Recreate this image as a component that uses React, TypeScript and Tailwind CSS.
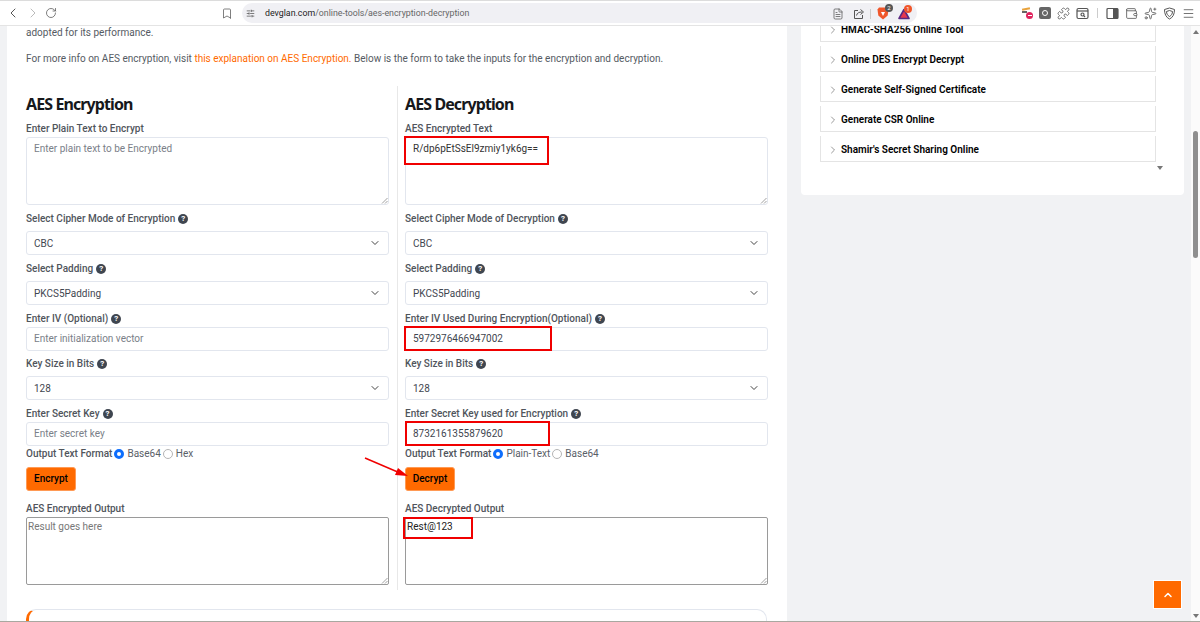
import type React from "react"
import { ChevronDown, ChevronLeft, ChevronRight, ChevronUp, RotateCw, Bookmark, SlidersHorizontal, FileText, Puzzle, Menu, Wallet, Sparkles } from "lucide-react"

const labelCls = "text-[10px] h-[14px] leading-[16px] font-medium text-[#50555c] flex items-start"
const boxCls = "h-[24px] w-full bg-white border border-[#e2e6ee] rounded-[3px] flex items-center px-[7px] text-[10px] text-[#3f4650] shrink-0"

function Help() {
  return (
    <span className="ml-[3px] mt-[3px] w-[10px] h-[10px] rounded-full bg-[#3f4650] text-white text-[8px] leading-[10px] font-bold text-center inline-block">?</span>
  )
}

function Select({ value }: { value: string }) {
  return (
    <div className={boxCls + " justify-between"}>
      <span>{value}</span>
      <ChevronDown className="w-[12px] h-[12px] text-[#444]" strokeWidth={2} />
    </div>
  )
}

function Radio({ on, text }: { on?: boolean; text: string }) {
  return (
    <span className="ml-[2px] h-[16px] flex items-center gap-[3px] font-normal text-[#5a6068]">
      {on ? (
        <span className="w-[10px] h-[10px] rounded-full border-[3px] border-[#0d6efd] bg-white" />
      ) : (
        <span className="w-[10px] h-[10px] rounded-full border border-[#b5b5b5] bg-white" />
      )}
      {text}
    </span>
  )
}

function Grip() {
  return (
    <svg className="absolute right-0 bottom-0" width="7" height="7" viewBox="0 0 7 7">
      <path d="M1 6.5 6.5 1M4 6.5 6.5 4" stroke="#888" strokeWidth="0.8" />
    </svg>
  )
}

function Column(props: {
  title: string
  textLabel: string
  textContent: React.ReactNode
  modeLabel: string
  ivLabel: string
  ivContent: React.ReactNode
  keyLabel: string
  keyContent: React.ReactNode
  radios: React.ReactNode
  button: string
  outLabel: string
  outContent: React.ReactNode
}) {
  return (
    <div className="flex flex-col w-[363px]">
      <h2 className="font-['Noto_Sans'] font-bold text-[16px] leading-[20px] tracking-[-0.9px] text-[#16181b] h-[33px] pt-[8px]">{props.title}</h2>
      <div className={labelCls + " mt-[2px]"}>{props.textLabel}</div>
      <div className="mt-[2px] h-[68px] bg-white border border-[#e2e6ee] rounded-[3px] px-[7px] py-[4px] text-[10px] leading-[14px] relative">
        {props.textContent}
        <Grip />
      </div>
      <div className={labelCls + " mt-[6px]"}>{props.modeLabel} <Help /></div>
      <div className="mt-[6px]"><Select value="CBC" /></div>
      <div className={labelCls + " mt-[6px]"}>Select Padding <Help /></div>
      <div className="mt-[6px]"><Select value="PKCS5Padding" /></div>
      <div className={labelCls + " mt-[6px]"}>{props.ivLabel} <Help /></div>
      <div className={boxCls + " mt-[2px] pb-[2px]"}>{props.ivContent}</div>
      <div className={labelCls + " mt-[5px]"}>Key Size in Bits <Help /></div>
      <div className="mt-[6px]"><Select value="128" /></div>
      <div className={labelCls + " mt-[6px]"}>{props.keyLabel} <Help /></div>
      <div className={boxCls + " mt-[2px] pb-[2px]"}>{props.keyContent}</div>
      <div className={labelCls}>Output Text Format{props.radios}</div>
      <button className="mt-[7px] w-[50px] h-[24px] pb-[2px] bg-[#ff6a00] border border-[#ff9a55] rounded-[3px] text-[10px] font-medium text-black">{props.button}</button>
      <div className={labelCls + " mt-[10px]"}>{props.outLabel}</div>
      <div className="mt-[2px] h-[68px] bg-white border border-[#9a9a9a] rounded-[2px] px-[1px] pt-[1px] text-[10px] leading-[16px] relative">
        {props.outContent}
        <Grip />
      </div>
    </div>
  )
}

const links = ["HMAC-SHA256 Online Tool", "Online DES Encrypt Decrypt", "Generate Self-Signed Certificate", "Generate CSR Online", "Shamir's Secret Sharing Online"]

export default function App() {
  return (
    <div className="w-[1200px] h-[622px] overflow-hidden bg-[#f1f2f4] font-['Roboto',sans-serif] flex flex-col relative">
      {/* browser toolbar */}
      <div className="h-[26px] shrink-0 bg-white border-t border-b border-t-[#dcdcdc] border-b-[#e4e4e4] flex items-center text-[#555] relative z-10">
        <div className="flex items-center gap-[4px] pl-[5px] w-[221px]">
          <ChevronLeft className="w-[16px] h-[16px]" strokeWidth={1.5} />
          <ChevronRight className="w-[16px] h-[16px] text-[#bbb]" strokeWidth={1.5} />
          <RotateCw className="w-[12px] h-[12px]" strokeWidth={1.5} />
        </div>
        <Bookmark className="w-[12px] h-[13px]" strokeWidth={1.5} />
        <div className="ml-[9px] w-[675px] h-[20px] pt-[1px] bg-[#f0f0f4] rounded-[10px] flex items-center pl-[4px] text-[8.8px]">
          <SlidersHorizontal className="w-[9px] h-[9px] mr-[10px]" />
          <span className="text-[#222]">devglan.com</span>
          <span className="text-[#666]">/online-tools/aes-encryption-decryption</span>
          <div className="ml-auto flex items-center pr-[7px]">
            <FileText className="w-[12px] h-[12px]" strokeWidth={1.5} />
            <svg className="ml-[9px]" width="12" height="12" viewBox="0 0 12 12" fill="none" stroke="#555" strokeWidth="1">
              <path d="M5 2.5H1.5v8h8V7" />
              <path d="M3.5 7.5C4 5 6 4 9 4M7.5 1.5 10.5 4 7.5 6.5" />
            </svg>
            <span className="w-px h-[10px] bg-[#ccc] ml-[5px]" />
            <span className="relative ml-[6px] w-[12px] h-[13px]">
              <svg width="12" height="13" viewBox="0 0 12 13">
                <path d="M2 .5h8l1.500 2-.8 6L6 12.500 1.300 8.500.5 2.500Z" fill="#f0562a" />
                <path d="M4 5h4L6 9Z" fill="#fff" />
              </svg>
              <span className="absolute -top-[3px] -right-[4px] w-[8px] h-[8px] rounded-full bg-[#555] text-white text-[6px] leading-[8px] text-center">2</span>
            </span>
            <span className="relative ml-[9px] w-[12px] h-[12px]">
              <svg width="12" height="12" viewBox="0 0 12 12">
                <path d="M6 1.500 11 10.500H1Z" fill="#e8384f" stroke="#5a2a82" strokeWidth="1.600" strokeLinejoin="round" />
              </svg>
              <span className="absolute -top-[3px] -right-[2px] w-[8px] h-[8px] rounded-full bg-[#f0562a] text-white text-[6px] leading-[8px] text-center">1</span>
            </span>
          </div>
        </div>
        <div className="flex items-center ml-[104px] gap-[6px]">
          <span className="relative w-[12px] h-[12px]">
            <span className="absolute left-[1px] top-[1px] w-[8px] h-[2px] bg-[#e8a23c] -rotate-12" />
            <span className="absolute left-[1px] top-[4px] w-[5px] h-[2px] bg-[#666]" />
            <span className="absolute right-0 bottom-0 w-[7px] h-[7px] rounded-full bg-[#e0245e] flex items-center justify-center"><span className="w-[4px] h-px bg-white" /></span>
          </span>
          <span className="w-[12px] h-[12px] rounded-[2px] bg-[#666] flex items-center justify-center"><span className="w-[6px] h-[6px] rounded-full border border-white" /></span>
          <Puzzle className="w-[13px] h-[13px]" strokeWidth={1.5} />
          <svg width="13" height="13" viewBox="0 0 13 13" fill="none" stroke="#555" strokeWidth="1.200">
            <rect x="1" y="1.500" width="11" height="10" rx="1.500" />
            <path d="M1 4h11" />
            <circle cx="6.500" cy="7.500" r="1.500" />
            <path d="M7.700 8.700 9 10" />
          </svg>
          <span className="w-px h-[10px] bg-[#ccc] mx-[2px]" />
          <svg width="13" height="13" viewBox="0 0 13 13">
            <rect x="1" y="1.500" width="11" height="10" rx="1" fill="none" stroke="#555" strokeWidth="1.200" />
            <rect x="7" y="1.500" width="5" height="10" fill="#555" />
          </svg>
          <Wallet className="w-[13px] h-[13px]" strokeWidth={1.5} />
          <Sparkles className="w-[13px] h-[13px]" strokeWidth={1.5} />
          <svg width="13" height="13" viewBox="0 0 13 13" fill="none" stroke="#555" strokeWidth="1">
            <path d="M6.500 1 11.500 2.500C11.500 7 10 10.500 6.500 12 3 10.500 1.500 7 1.500 2.500Z" />
            <path d="M6.500 3.500 9.500 4.500C9.500 6.500 8.500 8.500 6.500 9.500 4.500 8.500 3.500 6.500 3.500 4.500Z" />
          </svg>
          <Menu className="w-[13px] h-[13px]" strokeWidth={1.5} />
        </div>
      </div>

      {/* page */}
      <div className="flex flex-1 min-h-0">
        <div className="ml-[7px] w-[780px] bg-white pl-[19px] pr-[19px] overflow-hidden">
          <p className="text-[10px] leading-[14px] text-[#555b63]">adopted for its performance.</p>
          <p className="text-[10px] leading-[14px] text-[#555b63] mt-[12px] whitespace-nowrap">
            For more info on AES encryption, visit <span className="text-[#ff6a00]">this explanation on AES Encryption.</span> Below is the form to take the inputs for the encryption and decryption.
          </p>
          <div className="flex mt-[20px]">
            <Column
              title="AES Encryption"
              textLabel="Enter Plain Text to Encrypt"
              textContent={<span className="text-[#7a8088]">Enter plain text to be Encrypted</span>}
              modeLabel="Select Cipher Mode of Encryption"
              ivLabel="Enter IV (Optional)"
              ivContent={<span className="text-[#7a8088]">Enter initialization vector</span>}
              keyLabel="Enter Secret Key"
              keyContent={<span className="text-[#7a8088]">Enter secret key</span>}
              radios={<><Radio on text="Base64" /><Radio text="Hex" /></>}
              button="Encrypt"
              outLabel="AES Encrypted Output"
              outContent={<span className="text-[#777]">Result goes here</span>}
            />
            <div className="w-px bg-[#e8e8e8] ml-[8px] mr-[7px] h-[504px]" />
            <Column
              title="AES Decryption"
              textLabel="AES Encrypted Text"
              textContent={<span className="text-[#333]">R/dp6pEtSsEl9zmiy1yk6g==</span>}
              modeLabel="Select Cipher Mode of Decryption"
              ivLabel="Enter IV Used During Encryption(Optional)"
              ivContent="5972976466947002"
              keyLabel="Enter Secret Key used for Encryption"
              keyContent="8732161355879620"
              radios={<><Radio on text="Plain-Text" /><Radio text="Base64" /></>}
              button="Decrypt"
              outLabel="AES Decrypted Output"
              outContent={<span className="text-[#222]">Rest@123</span>}
            />
          </div>
          <div className="mt-[19px] w-[741px] h-[40px] border border-[#e2e6ee] border-l-[3px] border-l-[#ff6a00] rounded-[10px]" />
        </div>

        {/* sidebar */}
        <div className="ml-[14px] w-[383px] h-[169px] bg-white rounded-b-[4px] pl-[19px] pr-[28px] relative overflow-hidden">
          <div className="-mt-[10px] flex flex-col gap-[4px]">
            {links.map((l) => (
              <div key={l} className="h-[26px] pt-[2px] border border-t-0 border-[#e4e4e4] flex items-center pl-[6px] gap-[2px] text-[10px] font-semibold text-black shrink-0">
                <ChevronRight className="w-[12px] h-[12px] text-[#777]" strokeWidth={1.5} />
                {l}
              </div>
            ))}
          </div>
          <span className="absolute right-[21px] top-[140px] w-0 h-0 border-l-[3px] border-r-[3px] border-t-[4px] border-l-transparent border-r-transparent border-t-[#777]" />
        </div>

        {/* scrollbar */}
        <div className="ml-auto w-[9px] bg-[#fbfbfb] relative">
          <span className="absolute left-[2px] top-[4px] w-0 h-0 border-l-[3px] border-r-[3px] border-b-[4px] border-l-transparent border-r-transparent border-b-[#777]" />
          <div className="absolute left-[2px] top-[105px] w-[5px] h-[127px] rounded-[3px] bg-[#8f8f8f]" />
          <span className="absolute left-[2px] bottom-[4px] w-0 h-0 border-l-[3px] border-r-[3px] border-t-[4px] border-l-transparent border-r-transparent border-t-[#777]" />
        </div>
      </div>

      {/* red annotation boxes, drawn over the screenshot */}
      <div className="absolute left-[404px] top-[136px] w-[145px] h-[29px] border-2 border-[#f00000]" />
      <div className="absolute left-[404px] top-[326px] w-[148px] h-[25px] border-2 border-[#f00000]" />
      <div className="absolute left-[405px] top-[421px] w-[145px] h-[25px] border-2 border-[#f00000]" />
      <div className="absolute left-[403px] top-[517px] w-[70px] h-[22px] border-2 border-[#f00000]" />
      <svg className="absolute left-[360px] top-[455px]" width="50" height="26" viewBox="0 0 50 26">
        <path d="M5 3 40 18" stroke="#f00000" strokeWidth="1.500" />
        <path d="M48 21 35 20 38 13Z" fill="#f00000" />
      </svg>

      {/* back to top */}
      <div className="absolute left-[1153px] top-[580px] w-[29px] h-[29px] bg-[#ff6a00] border border-white flex items-center justify-center">
        <ChevronUp className="w-[12px] h-[12px] text-white" strokeWidth={3} />
      </div>
      <div className="absolute left-0 right-0 bottom-0 h-px bg-[#a8a8a0]" />
    </div>
  )
}
